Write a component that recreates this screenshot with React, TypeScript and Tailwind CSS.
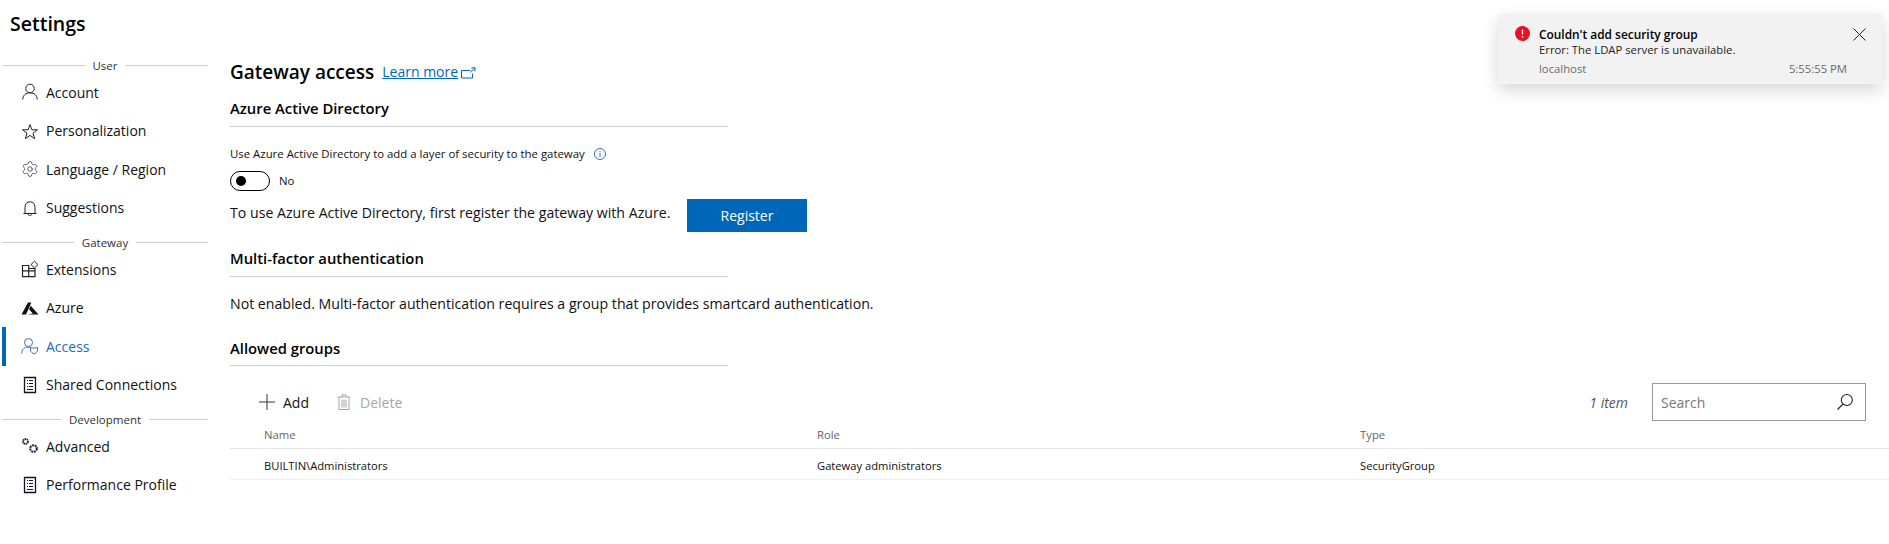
import React from "react";
import { Settings } from "lucide-react";

const font = "font-['Open_Sans','Noto_Sans',sans-serif]";

function I({ children, c = "#222" }: { children: React.ReactNode; c?: string }) {
  return (
    <svg width="18" height="18" viewBox="0 0 18 18" fill="none" stroke={c} strokeWidth="1" className="shrink-0">
      {children}
    </svg>
  );
}

const doc = (
  <I c="#1a1020">
    <path d="M3.500 1.500h11v15h-11z" strokeWidth="1.300" />
    <path d="M6 4.500h1M8 4.500h4M6 7.500h1M8 7.500h4M6 10.500h1M8 10.500h4M6 13.500h6" />
  </I>
);

const groups: { label: string; lw: string; items: { t: string; icon: React.ReactNode; active?: boolean }[] }[] = [
  {
    label: "User",
    lw: "w-[40px]",
    items: [
      { t: "Account", icon: <I><circle cx="9" cy="5.500" r="4.300" /><path d="M1.800 16.500c0-4.200 3-6.700 7.200-6.700s7.200 2.500 7.200 6.700" /></I> },
      { t: "Personalization", icon: <I><path d="M9 2.500l1.900 5.300h5.600l-4.500 3.400 1.700 5.500L9 13.400l-4.700 3.300L6 11.200 1.500 7.800h5.600z" /></I> },
      { t: "Language / Region", icon: <Settings size={18} strokeWidth={1} color="#333" className="shrink-0" /> },
      { t: "Suggestions", icon: <I><path d="M4 14V8.500C4 5 6 2.800 9 2.800s5 2.200 5 5.700V14M2.500 14.500h13M7.300 15c0 2.200 3.400 2.200 3.400 0" /></I> },
    ],
  },
  {
    label: "Gateway",
    lw: "w-[62px]",
    items: [
      { t: "Extensions", icon: <I><path d="M1.500 5.500h6.200v11.200H1.500zM7.700 8.500H14v8.200H7.700zM1.500 10.800H14" strokeWidth="1.200" /><path d="M13.500 1.200l3.500 3.400-3.500 3.400L10 4.600z" /></I> },
      {
        t: "Azure",
        icon: (
          <svg width="18" height="18" viewBox="0 0 18 18" className="shrink-0">
            <path d="M0.500 15.500 L7 3.500 h3.400 L5 15.500z M9.800 6.800 L17.500 15.500 H6.800 l5-.9 -3.800-4.300z" fill="#111" />
          </svg>
        ),
      },
      {
        t: "Access",
        active: true,
        icon: (
          <I c="#3b6fb5">
            <circle cx="7.500" cy="5.500" r="4" />
            <path d="M.8 16.500c0-4.200 2.400-6.300 6-6.300 1.200 0 2.300.2 3.200.7" />
            <path d="M9.500 10.500c2 .8 4 .8 7 0V13c0 2.200-2.800 3.700-3.500 4-.7-.3-3.500-1.800-3.500-4z" />
          </I>
        ),
      },
      { t: "Shared Connections", icon: doc },
    ],
  },
  {
    label: "Development",
    lw: "w-[88px]",
    items: [
      {
        t: "Advanced",
        icon: (
          <I>
            <circle cx="4.500" cy="4.500" r="2.500" strokeDasharray="1.600 .5" strokeWidth="1.800" />
            <circle cx="12.500" cy="11.500" r="3.300" strokeDasharray="2 .7" strokeWidth="2" />
          </I>
        ),
      },
      { t: "Performance Profile", icon: doc },
    ],
  },
];

function Heading({ children }: { children: React.ReactNode }) {
  return (
    <div className="w-[498px] h-[18px] flex items-center text-[14.800px] font-semibold text-black leading-none">
      {children}
    </div>
  );
}

function Rule() {
  return <div className="w-[498px] h-px bg-[#cfcfcf] mt-[9px]" />;
}

export default function App() {
  return (
    <div className={`relative w-[1889px] h-[544px] bg-white overflow-hidden flex ${font}`}>
      <aside className="w-[230px] shrink-0 flex flex-col">
        <h1 className="h-[65px] pl-[10px] pt-[8px] text-[19.500px] font-semibold text-black leading-[32px]">Settings</h1>
        {groups.map((g) => (
          <div key={g.label} className="w-[206px] ml-[2px] pb-[15px]">
            <div className="h-px flex items-center text-[#333]">
              <div className="flex-1 h-px bg-[#cfcfcf]" />
              <span className={`${g.lw} text-center leading-none text-[11.500px] bg-white`}>{g.label}</span>
              <div className="flex-1 h-px bg-[#cfcfcf]" />
            </div>
            <div className="pt-[7px]">
              {g.items.map((it) => (
                <div
                  key={it.t}
                  className={`h-[38.500px] flex items-center gap-[7px] pl-[15px] border-l-[4px] text-[14px] whitespace-nowrap ${
                    it.active ? "border-[#0067b8] text-[#1f6cc0]" : "border-transparent text-[#111]"
                  }`}
                >
                  {it.icon}
                  <span>{it.t}</span>
                </div>
              ))}
            </div>
          </div>
        ))}
      </aside>

      <main className="flex-1 min-w-0 pt-[60px] text-[#111]">
        <div className="flex items-center gap-[8px] h-[24px]">
          <h2 className="text-[19px] font-semibold text-black leading-none">Gateway access</h2>
          <a className="flex items-end text-[14px] text-[#0067b8] underline leading-none -mt-[1px]">
            Learn more
            <svg width="15" height="12" viewBox="0 0 15 12" fill="none" stroke="#0067b8" strokeWidth="1" className="ml-[3px]">
              <path d="M9 3.500H.5v7.500h11V6.500M9 5.500 14 .8M10.500.8H14v3.500" />
            </svg>
          </a>
        </div>

        <div className="mt-[15px]">
          <Heading>Azure Active Directory</Heading>
          <Rule />
        </div>

        <div className="mt-[19px] flex items-center gap-[8px] h-[16px] text-[11.400px]">
          <span>Use Azure Active Directory to add a layer of security to the gateway</span>
          <svg width="14" height="14" viewBox="0 0 14 14" fill="none" stroke="#3b6fb5" strokeWidth="1">
            <circle cx="7" cy="7" r="5.500" />
            <path d="M7 6v4M7 3.800v1" />
          </svg>
        </div>

        <div className="mt-[9px] flex items-center gap-[9px] h-[20px] text-[11.400px]">
          <div className="w-[40px] h-[20px] rounded-full border border-black flex items-center pl-[5px]">
            <div className="w-[10px] h-[10px] rounded-full bg-black" />
          </div>
          <span>No</span>
        </div>

        <div className="mt-[8px] flex items-center h-[33px] text-[14.150px]">
          <span className="w-[457px] -mt-[6px]">To use Azure Active Directory, first register the gateway with Azure.</span>
          <button className="w-[120px] h-[33px] bg-[#0067b8] text-white text-[14px]">Register</button>
        </div>

        <div className="mt-[17px]">
          <Heading>Multi-factor authentication</Heading>
          <Rule />
        </div>

        <p className="mt-[17px] text-[14.150px] leading-[20px]">
          Not enabled. Multi-factor authentication requires a group that provides smartcard authentication.
        </p>

        <div className="mt-[25px]">
          <Heading>Allowed groups</Heading>
          <div className="w-[498px] h-px bg-[#cfcfcf] mt-[8px]" />
        </div>

        <div className="mt-[17px] h-[38px] flex items-center pr-[23px]">
          <div className="flex items-center pl-[29px] text-[14px]">
            <svg width="16" height="16" viewBox="0 0 16 16" stroke="#333" strokeWidth="1">
              <path d="M8 0v16M0 8h16" />
            </svg>
            <span className="ml-[8px]">Add</span>
            <svg width="14" height="16" viewBox="0 0 14 16" fill="none" stroke="#a6a6a6" strokeWidth="1" className="ml-[28px]">
              <path d="M2 3v12.500h10V3M.5 3h13M5 3V.8h4V3M5 5.500v8M7 5.500v8M9 5.500v8" />
            </svg>
            <span className="ml-[9px] text-[#a6a6a6]">Delete</span>
          </div>
          <div className="ml-auto flex items-center">
            <span className="italic text-[14px] text-[#555] mr-[24px]">1 item</span>
            <div className="w-[214px] h-[38px] border border-[#979797] flex items-center justify-between pl-[8px] pr-[11px] text-[14px] text-[#777]">
              <span>Search</span>
              <svg width="18" height="18" viewBox="0 0 18 18" fill="none" stroke="#222" strokeWidth="1.100">
                <circle cx="10.800" cy="7" r="5.500" />
                <path d="M7 11 1.500 16.500" />
              </svg>
            </div>
          </div>
        </div>

        <div className="mt-[6px] grid grid-cols-[553px_543px_1fr] pl-[34px] h-[22px] border-b border-[#e5e5e5] text-[11.300px] text-[#666] items-start leading-[16px]">
          <span>Name</span>
          <span>Role</span>
          <span>Type</span>
        </div>
        <div className="grid grid-cols-[553px_543px_1fr] pl-[34px] h-[31px] pt-[5px] border-b border-[#eeeeee] text-[11.200px] text-[#111] items-center">
          <span>BUILTIN\Administrators</span>
          <span>Gateway administrators</span>
          <span>SecurityGroup</span>
        </div>
      </main>

      <div className="absolute left-[1498px] top-[14px] w-[384px] h-[70px] bg-[#f2f2f2] shadow-[0_6px_16px_rgba(0,0,0,0.16)] flex pl-[17px] pt-[12px] pr-[16px]">
        <svg width="15" height="15" viewBox="0 0 15 15" className="shrink-0">
          <circle cx="7.500" cy="7.500" r="7.500" fill="#e81123" />
          <path d="M7.500 3.500v5M7.500 10v1.500" stroke="#fff" strokeWidth="1.300" />
        </svg>
        <div className="ml-[9px] w-[308px] text-[11.300px] leading-[16px]">
          <div className="font-semibold text-black text-[11.900px]">Couldn't add security group</div>
          <div className="text-[#222]">Error: The LDAP server is unavailable.</div>
          <div className="flex justify-between text-[#6b6b6b] mt-[3px]">
            <span>localhost</span>
            <span>5:55:55 PM</span>
          </div>
        </div>
        <svg width="13" height="13" viewBox="0 0 13 13" stroke="#222" strokeWidth="1" className="ml-auto mt-[2px] shrink-0">
          <path d="M.5.500l12 12M12.500.500l-12 12" />
        </svg>
      </div>
    </div>
  );
}
